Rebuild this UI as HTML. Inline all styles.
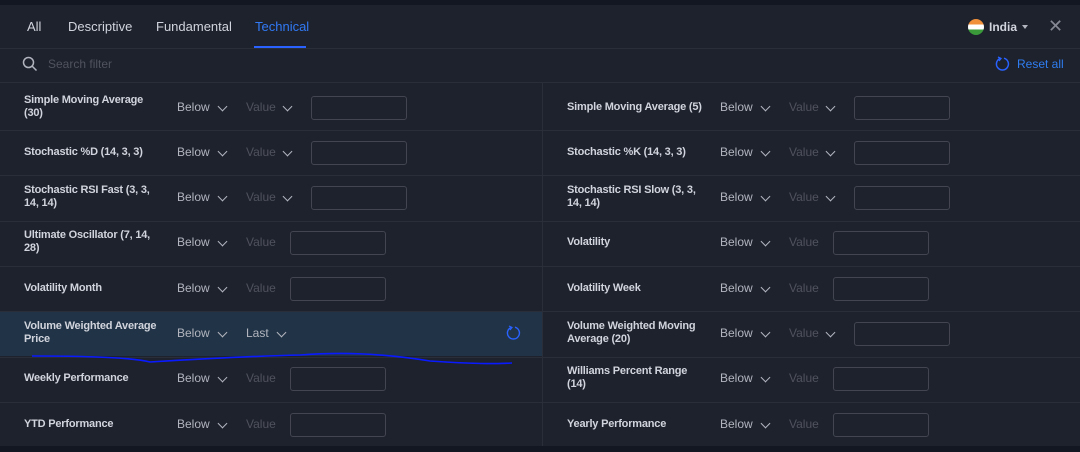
<!DOCTYPE html><html><head><style>
body{margin:0;width:1080px;height:452px;background:#131722;font-family:"Liberation Sans",sans-serif;overflow:hidden;position:relative}
.p{position:absolute;left:0;top:5px;width:1080px;height:441px;background:#1e222d}
.a{position:absolute;white-space:nowrap}
.t{font-size:13px;color:#d1d4dc;top:19px}
.l{font-size:11px;color:#d1d4dc;line-height:13px;font-weight:bold;letter-spacing:-0.2px}
.s{font-size:12px;color:#b2b5be}
.v{font-size:12px;color:#50535e}
.in{position:absolute;width:94px;height:22px;border:1px solid #434651;border-radius:3px}
.hl{position:absolute;height:1px;background:#2a2e39}
.ch{position:absolute;width:6px;height:6px;border-right:1.3px solid #b2b5be;border-bottom:1.3px solid #b2b5be;transform:rotate(45deg)}
</style></head><body>
<div class="p"></div>
<div class="a t" style="left:27px">All</div>
<div class="a t" style="left:68px">Descriptive</div>
<div class="a t" style="left:156px">Fundamental</div>
<div class="a t" style="left:255px;color:#3179f5">Technical</div>
<div class="a" style="left:254px;top:46px;width:52px;height:2px;background:#2962ff"></div>
<div class="hl" style="left:0;top:48px;width:1080px"></div>
<div class="a" style="left:968px;top:19px;width:16px;height:16px;border-radius:50%;background:linear-gradient(#f0903a 33%,#fff 33%,#fff 66%,#3a9a3a 66%)"></div>
<div class="a t" style="left:989px;font-weight:bold;font-size:12px;top:20px">India</div>
<div class="a" style="left:1022px;top:25px;border:3.5px solid transparent;border-top:4px solid #b2b5be"></div>
<div class="a" style="left:1048px;top:16px;font-size:18px;color:#868993">✕</div>
<svg class="a" style="left:22px;top:56px" width="16" height="16"><circle cx="6.5" cy="6.5" r="5" stroke="#b2b5be" stroke-width="1.5" fill="none"/><path d="M10 10l4.5 4.5" stroke="#b2b5be" stroke-width="1.5"/></svg>
<div class="a s" style="left:48px;top:57px;color:#50535e">Search filter</div>
<svg class="a" style="left:995px;top:56px" width="16" height="16"><path d="M5 2.5A6 6 0 1 0 9 2.2" stroke="#2962ff" stroke-width="1.5" fill="none"/><path d="M3 1l3 1.5-2 2.5" stroke="#2962ff" stroke-width="1.3" fill="none"/></svg>
<div class="a s" style="left:1017px;top:57px;color:#2f7df0">Reset all</div>
<div class="hl" style="left:0;top:82px;width:1080px"></div>
<div class="a" style="left:0;top:311px;width:542px;height:45px;background:#213447"></div>
<div class="a" style="left:542px;top:83px;width:1px;height:363px;background:#2a2e39"></div>
<div id="rows"></div>
<svg class="a" style="left:0;top:345px" width="540" height="25"><path d="M32 11C80 11 130 12 150 17C200 14 250 11 300 10C340 7 380 8 430 16C470 19 500 19 512 18" stroke="#0a1aff" stroke-width="1.6" fill="none"/></svg>
<svg class="a" style="left:505px;top:325px" width="16" height="16"><path d="M6 2.5A6 6 0 1 0 10 2.2" stroke="#2962ff" stroke-width="1.4" fill="none"/><path d="M4 1l3 1.5-2 2.5" stroke="#2962ff" stroke-width="1.2" fill="none"/></svg>
<script>
var L=[["Simple Moving Average<br>(30)",1],["Stochastic %D (14, 3, 3)",1],["Stochastic RSI Fast (3, 3,<br>14, 14)",1],["Ultimate Oscillator (7, 14,<br>28)",0],["Volatility Month",0],["Volume Weighted Average<br>Price",2],["Weekly Performance",0],["YTD Performance",0]];
var R=[["Simple Moving Average (5)",1],["Stochastic %K (14, 3, 3)",1],["Stochastic RSI Slow (3, 3,<br>14, 14)",1],["Volatility",0],["Volatility Week",0],["Volume Weighted Moving<br>Average (20)",1],["Williams Percent Range<br>(14)",0],["Yearly Performance",0]];
var h="";
function row(x,i,d){var c=107.5+i*45.3;var two=d[0].indexOf("<br>")>0;
h+='<div class="a l" style="left:'+(x+24)+'px;top:'+(c-(two?14:7))+'px">'+d[0]+'</div>';
h+='<div class="a s" style="left:'+(x+177)+'px;top:'+(c-8)+'px">Below</div><div class="ch" style="left:'+(x+219)+'px;top:'+(c-5)+'px"></div>';
if(d[1]==2){h+='<div class="a s" style="left:'+(x+246)+'px;top:'+(c-8)+'px">Last</div><div class="ch" style="left:'+(x+278)+'px;top:'+(c-5)+'px"></div>';}
else if(d[1]==1){h+='<div class="a v" style="left:'+(x+246)+'px;top:'+(c-8)+'px">Value</div><div class="ch" style="left:'+(x+284)+'px;top:'+(c-5)+'px"></div><div class="in" style="left:'+(x+311)+'px;top:'+(c-12)+'px"></div>';}
else{h+='<div class="a v" style="left:'+(x+246)+'px;top:'+(c-8)+'px">Value</div><div class="in" style="left:'+(x+290)+'px;top:'+(c-12)+'px"></div>';}
if(i<7)h+='<div class="hl" style="left:'+x+'px;top:'+Math.round(c+22.5)+'px;width:'+(x?538:542)+'px"></div>';}
for(var i=0;i<8;i++){row(0,i,L[i]);row(543,i,R[i]);}
document.getElementById("rows").innerHTML=h;
</script>
</body></html>
